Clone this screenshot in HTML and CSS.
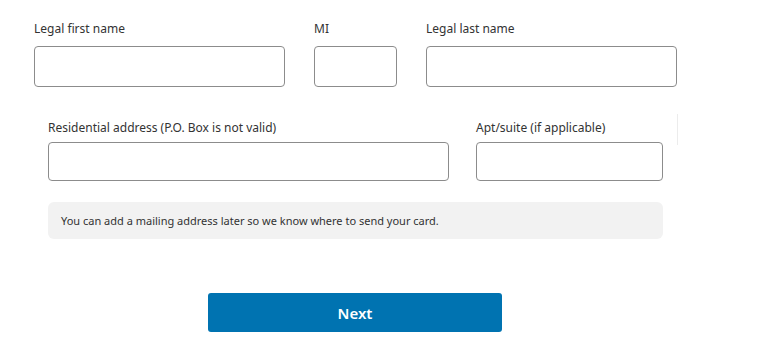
FILE: index.html
```html
<!DOCTYPE html>
<html lang="en">
<head>
<meta charset="utf-8">
<link rel="stylesheet" href="styles.css">
</head>
<body>
<form class="form">
  <div class="row row-name">
    <label class="field f-first"><span class="lbl">Legal first name</span><input class="inp" type="text"></label>
    <label class="field f-mi"><span class="lbl">MI</span><input class="inp" type="text"></label>
    <label class="field f-last"><span class="lbl">Legal last name</span><input class="inp" type="text"></label>
  </div>
  <div class="addr">
    <div class="row row-addr">
      <label class="field f-addr"><span class="lbl">Residential address (P.O. Box is not valid)</span><input class="inp inp-s" type="text"></label>
      <label class="field f-apt"><span class="lbl">Apt/suite (if applicable)</span><input class="inp inp-s" type="text"></label>
      <div class="rule"></div>
    </div>
    <div class="note">You can add a mailing address later so we know where to send your card.</div>
  </div>
  <div class="actions">
    <button class="btn" type="button">Next</button>
  </div>
</form>
</body>
</html>
```
FILE: styles.css
```css
* { box-sizing: border-box; }
html, body { margin: 0; padding: 0; background: #fff; }
body {
  font-family: "Noto Sans", "Open Sans", "DejaVu Sans", sans-serif;
  color: #333;
  width: 768px;
  height: 338px;
  overflow: hidden;
}
.form { padding-top: 21px; }
.row { display: flex; }
.row-name { padding-left: 34px; gap: 29px; }
.field { display: flex; flex-direction: column; }
.lbl {
  font-size: 12px;
  line-height: 16px;
  color: #333;
  margin-bottom: 9px;
}
.inp {
  display: block;
  height: 41px;
  border: 1px solid #8c8c8c;
  border-radius: 4px;
  background: #fff;
  margin: 0;
  padding: 0 10px;
  font: inherit;
}
.inp-s { height: 39px; }
.f-first .inp { width: 251px; }
.f-mi .inp { width: 83px; }
.f-last .inp { width: 251px; }
.addr { padding-left: 48px; margin-top: 33px; width: 678px; }
.row-addr { gap: 27px; position: relative; }
.row-addr .lbl { margin-bottom: 6px; }
.f-addr .inp { width: 401px; }
.f-apt .inp { width: 187px; }
.rule {
  position: absolute;
  left: 629px;
  top: -6px;
  width: 1px;
  height: 31px;
  background: #ececec;
}
.note {
  margin-top: 21px;
  width: 615px;
  height: 37px;
  background: #f2f2f2;
  border-radius: 6px;
  padding: 0 13px;
  font-size: 11px;
  line-height: 37px;
  color: #333;
}
.actions { padding-left: 208px; margin-top: 54px; }
.btn {
  display: block;
  width: 294px;
  height: 39px;
  border: 0;
  border-radius: 3px;
  background: #0073b1;
  color: #fff;
  font-family: inherit;
  font-size: 15px;
  font-weight: 600;
  padding: 0;
  margin: 0;
}
```
